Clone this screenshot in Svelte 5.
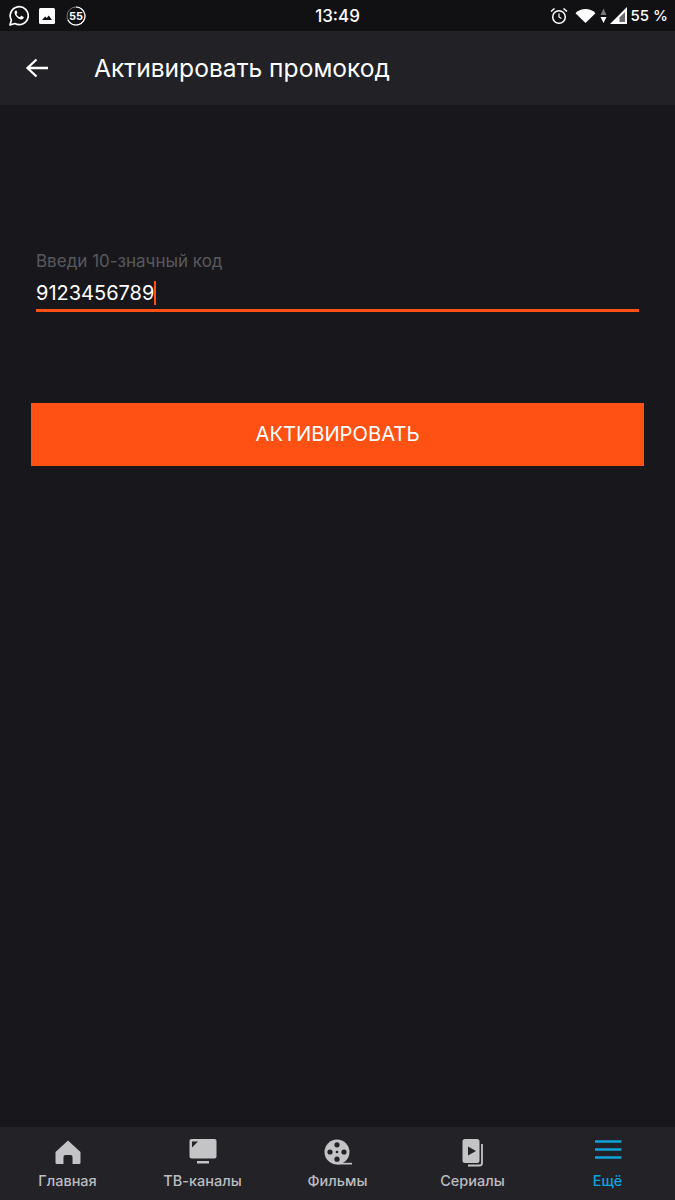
<script>
  const tabs = [
    { label: 'Главная', icon: 'home' },
    { label: 'ТВ-каналы', icon: 'tv' },
    { label: 'Фильмы', icon: 'film' },
    { label: 'Сериалы', icon: 'series' },
    { label: 'Ещё', icon: 'more', active: true }
  ];
</script>

<div class="screen">
  <div class="status">
    <div class="status-left">
      <svg class="ic-wa" width="20" height="21" viewBox="0 0 20 21">
        <path d="M1 20l1.400-4.900A9 9 0 1 1 5.800 18.500z" fill="none" stroke="#fff" stroke-width="1.700" stroke-linejoin="round"/>
        <path d="M7 5.600c-.5 0-1.400.8-1.400 2.200 0 2.600 3.600 6.600 6.800 6.600 1.300 0 2.200-.9 2.300-1.600.1-.6-.1-.9-.3-1l-1.800-.9c-.3-.1-.5 0-.7.2l-.7.9c-.2.2-.4.2-.7.1-1.300-.6-2.200-1.400-2.900-2.700-.1-.2-.1-.4.1-.6l.5-.7c.1-.2.2-.4.1-.6l-.7-1.700c-.2-.3-.4-.4-.6-.2z" fill="#fff"/>
      </svg>
      <svg width="16" height="16" viewBox="0 0 16 16">
        <rect width="16" height="16" rx="1.500" fill="#fff"/>
        <path d="M3 12l3.200-3.600 1.600 1.700 2-2.500L13 12z" fill="#111114"/>
      </svg>
      <span class="timer">
        <svg width="20" height="20" viewBox="0 0 20 20">
          <circle cx="10" cy="10" r="9" fill="none" stroke="#77777a" stroke-width="1"/>
          <path d="M10 1a9 9 0 1 1-8.200 12.700" fill="none" stroke="#fff" stroke-width="1.200"/>
        </svg>
        <span class="timer-num">55</span>
      </span>
    </div>
    <div class="clock">13:49</div>
    <div class="status-right">
      <svg width="18" height="18" viewBox="0 0 18 18">
        <circle cx="9" cy="10" r="6.300" fill="none" stroke="#fff" stroke-width="1.500"/>
        <path d="M9 6.500V10l2.400 1.500" fill="none" stroke="#fff" stroke-width="1.200"/>
        <path d="M1 4.500L4.500 1.500M17 4.500L13.500 1.500" stroke="#fff" stroke-width="1.600"/>
      </svg>
      <svg class="ic-wifi" width="21" height="15" viewBox="0 0 21 15">
        <path d="M0.500 5.200C6-0.400 15-0.400 20.500 5.200L10.500 15z" fill="#fff"/>
      </svg>
      <svg class="ic-arrows" width="7" height="16" viewBox="0 0 7 16">
        <path d="M3.500 0.500L6.500 7H.5z" fill="#77777a"/>
        <path d="M.5 9h6l-3 6z" fill="#fff"/>
      </svg>
      <svg class="ic-signal" width="17" height="17" viewBox="0 0 17 17">
        <path d="M0 17L17 0v17z" fill="#fff"/>
        <path d="M9.500 10.500l5.500-5.500v10H9.500z" fill="#6a6a6d"/>
      </svg>
      <span class="battery">55 %</span>
    </div>
  </div>

  <header class="topbar">
    <svg class="back" width="24" height="24" viewBox="0 0 24 24">
      <path d="M23 12H2.500M11.500 3.500L2.500 12l9 8.500" fill="none" stroke="#fff" stroke-width="2.300"/>
    </svg>
    <h1>Активировать промокод</h1>
  </header>

  <main class="content">
    <div class="field">
      <div class="label">Введи 10-значный код</div>
      <div class="value"><span>9123456789</span><i class="caret"></i></div>
    </div>
    <button class="submit">АКТИВИРОВАТЬ</button>
  </main>

  <nav class="tabs">
    {#each tabs as t}
      <div class="tab" class:active={t.active}>
        <div class="tab-icon">
          {#if t.icon === 'home'}
            <svg width="26" height="26" viewBox="0 0 26 26">
              <path d="M13 1.500L25.500 13v10.500a1.500 1.500 0 0 1-1.500 1.500h-6.500v-7a2 2 0 0 0-2-2h-5a2 2 0 0 0-2 2v7H2a1.500 1.500 0 0 1-1.500-1.500V13z" fill="#c4c4c6"/>
            </svg>
          {:else if t.icon === 'tv'}
            <svg width="28" height="26" viewBox="0 0 28 26">
              <rect x="0.500" y="0" width="27" height="19.500" rx="2" fill="#c4c4c6"/>
              <path d="M3 2.500h6l-6 6z" fill="#222227"/>
              <rect x="8" y="22" width="12" height="2.500" fill="#c4c4c6"/>
            </svg>
          {:else if t.icon === 'film'}
            <svg width="28" height="26" viewBox="0 0 28 26">
              <circle cx="13" cy="13" r="12.500" fill="#c4c4c6"/>
              <circle cx="13" cy="5.800" r="2.600" fill="#222227"/>
              <circle cx="13" cy="20.200" r="2.600" fill="#222227"/>
              <circle cx="6" cy="13" r="2.600" fill="#222227"/>
              <circle cx="20" cy="13" r="2.600" fill="#222227"/>
              <circle cx="13" cy="13" r="1.300" fill="#222227"/>
              <rect x="13" y="23.800" width="15" height="1.700" fill="#c4c4c6"/>
            </svg>
          {:else if t.icon === 'series'}
            <svg width="22" height="28" viewBox="0 0 22 28">
              <rect x="0.500" y="0" width="17" height="24" rx="2.500" fill="#c4c4c6"/>
              <path d="M6 7.500l8 4.500-8 4.500z" fill="#222227"/>
              <path d="M20 5v19a2.500 2.500 0 0 1-2.500 2.500H6" fill="none" stroke="#c4c4c6" stroke-width="1.800"/>
            </svg>
          {:else}
            <svg width="28" height="22" viewBox="0 0 28 22">
              <path d="M1 2.500h26.500M1 10.500h26.500M1 18.500h26.500" stroke="#0fa3dd" stroke-width="2.500"/>
            </svg>
          {/if}
        </div>
        <div class="tab-label">{t.label}</div>
      </div>
    {/each}
  </nav>
</div>

<style>
  :global(body) {
    margin: 0;
    background: #18181c;
  }
  .screen {
    width: 675px;
    height: 1200px;
    display: flex;
    flex-direction: column;
    background: #18181c;
    font-family: Inter, "Noto Sans", sans-serif;
    color: #fff;
    overflow: hidden;
  }
  .status {
    height: 31px;
    background: #111114;
    display: grid;
    grid-template-columns: 1fr auto 1fr;
    align-items: center;
    padding: 0 7px 0 9px;
  }
  .status-left {
    display: flex;
    align-items: center;
    gap: 10px;
  }
  .timer {
    position: relative;
    width: 20px;
    height: 20px;
    display: block;
    margin-left: 1px;
  }
  .timer-num {
    position: absolute;
    inset: 0;
    display: flex;
    align-items: center;
    justify-content: center;
    font-size: 11px;
    font-weight: 700;
  }
  .clock {
    font-size: 17px;
    font-weight: 500;
    margin-left: -2px;
  }
  .status-right {
    display: flex;
    align-items: center;
    justify-content: flex-end;
    gap: 4px;
  }
  .ic-wifi {
    margin-left: 3px;
  }
  .ic-signal {
    margin-left: -1px;
  }
  .battery {
    font-size: 15px;
    font-weight: 500;
  }
  .topbar {
    height: 74px;
    background: #212126;
    display: flex;
    align-items: center;
    padding-left: 25px;
    box-sizing: border-box;
  }
  .back {
    margin-right: 45px;
  }
  h1 {
    margin: 0;
    font-size: 24.600px;
    font-weight: 400;
  }
  .content {
    flex: 1;
    padding: 146px 31px 0;
    display: flex;
    flex-direction: column;
  }
  .field {
    margin: 0 5px;
    border-bottom: 3px solid #fe5113;
    height: 58px;
  }
  .label {
    font-size: 17px;
    line-height: 20px;
    color: #58585c;
  }
  .value {
    font-size: 20px;
    line-height: 26px;
    margin-top: 9px;
    display: flex;
    align-items: center;
  }
  .caret {
    width: 2px;
    height: 24px;
    background: #fe5113;
  }
  .submit {
    margin-top: 91px;
    height: 63px;
    background: #fe5113;
    border: 0;
    color: #fff;
    font-family: inherit;
    font-size: 20.200px;
    font-weight: 400;
    padding: 0 0 2px;
  }
  .tabs {
    height: 73px;
    background: #222227;
    display: grid;
    grid-template-columns: repeat(5, 1fr);
  }
  .tab {
    display: flex;
    flex-direction: column;
    align-items: center;
    padding-top: 12px;
  }
  .tab-icon {
    height: 28px;
    display: flex;
    align-items: flex-start;
    justify-content: center;
  }
  .tab-label {
    font-size: 14.500px;
    font-weight: 500;
    line-height: 18px;
    margin-top: 5px;
    color: #bdbdc0;
  }
  .active .tab-label {
    color: #0fa3dd;
  }
</style>
